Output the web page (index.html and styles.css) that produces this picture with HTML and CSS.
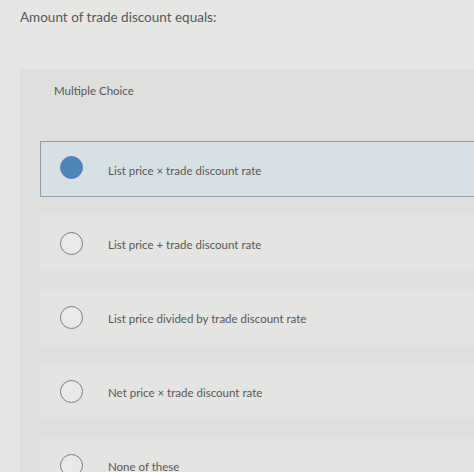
FILE: index.html
```html
<!DOCTYPE html>
<html lang="en">
<head>
    <meta charset="UTF-8">
    <title>Multiple Choice</title>
    <link rel="stylesheet" href="styles.css">
</head>
<body>
<div class="page">
    <div class="question">Amount of trade discount equals:</div>
    <div class="panel">
        <div class="panel_title">Multiple Choice</div>
        <div class="options">
            <div class="option selected">
                <span class="radio"></span>
                <span class="label">List price × trade discount rate</span>
            </div>
            <div class="option">
                <span class="radio"></span>
                <span class="label">List price + trade discount rate</span>
            </div>
            <div class="option">
                <span class="radio"></span>
                <span class="label">List price divided by trade discount rate</span>
            </div>
            <div class="option">
                <span class="radio"></span>
                <span class="label">Net price × trade discount rate</span>
            </div>
            <div class="option">
                <span class="radio"></span>
                <span class="label">None of these</span>
            </div>
        </div>
    </div>
</div>
</body>
</html>
```

FILE: styles.css
```css
body {
    margin: 0;
    background-color: #e6e6e4;
    font-family: Lato, "Liberation Sans", sans-serif;
    color: #575757;
    overflow: hidden;
}

.page {
    height: 472px;
    overflow: hidden;
}

.question {
    font-size: 13.5px;
    padding: 9px 0 0 20px;
    height: 69px;
    box-sizing: border-box;
}

.panel {
    margin-left: 20px;
    background-color: #dfdfdd;
    padding: 15px 0 0 20px;
}

.panel_title {
    font-size: 11.5px;
    padding-left: 14px;
    height: 57px;
}

.options {
    display: flex;
    flex-direction: column;
    gap: 18px;
}

.option {
    height: 56px;
    display: flex;
    align-items: center;
    padding-left: 20px;
    background-color: #e4e4e2;
    box-sizing: border-box;
    margin-right: -10px;
}

.option.selected {
    background-color: #d7e0e5;
    border: 1px solid #8d9ea9;
    padding-left: 19px;
    padding-bottom: 4px;
}

.radio {
    width: 21px;
    height: 21px;
    border: 1.5px solid #7c7c7c;
    border-radius: 50%;
    background-color: #e9e9e7;
    flex-shrink: 0;
}

.selected .radio {
    background-color: #4e84b7;
    border-color: #4e84b7;
}

.label {
    font-size: 11.5px;
    margin-left: 25px;
    padding-top: 3px;
}

.selected .label {
    padding-top: 7px;
}
```
